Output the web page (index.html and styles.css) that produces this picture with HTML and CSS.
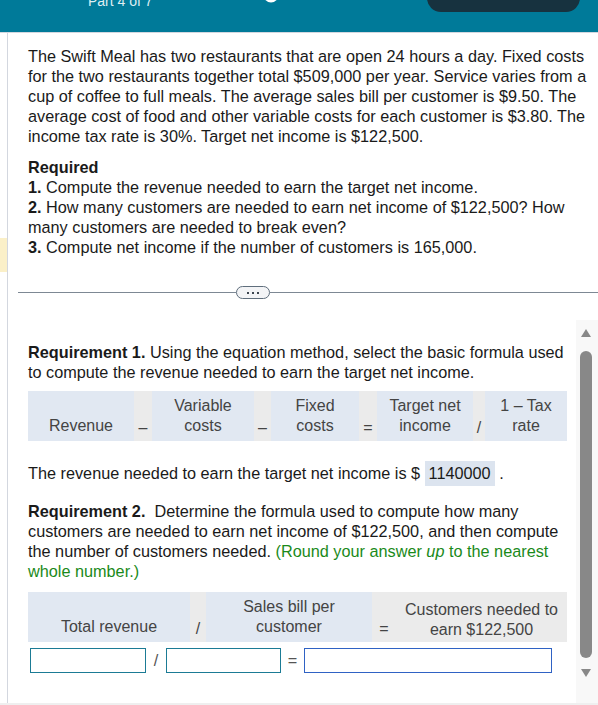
FILE: index.html
```html
<!DOCTYPE html>
<html>
<head>
<meta charset="utf-8">
<link rel="stylesheet" href="styles.css">
</head>
<body>
<header class="topbar">
  <span class="part">Part 4 of 7</span>
  <span class="step"><svg width="16" height="16" viewBox="0 0 16 16"><circle cx="8" cy="8" r="7.5" fill="#fff"/><path d="M5 8.5l2 2 4-4" stroke="#1a9a4a" stroke-width="1.6" fill="none"/></svg></span>
  <span class="darkbtn"></span>
</header>
<div class="page">
  <aside class="gutter"><div class="mark"></div></aside>
  <main class="main">
    <section class="intro">
      <p class="problem">The Swift Meal has two restaurants that are open 24 hours a day. Fixed costs for the two restaurants together total $509,000 per year. Service varies from a cup of coffee to full meals. The average sales bill per customer is $9.50. The average cost of food and other variable costs for each customer is $3.80. The income tax rate is 30%. Target net income is $122,500.</p>
      <p class="req-title">Required</p>
      <ol class="req-list">
        <li><b>1.</b> Compute the revenue needed to earn the target net income.</li>
        <li><b>2.</b> How many customers are needed to earn net income of $122,500? How many customers are needed to break even?</li>
        <li><b>3.</b> Compute net income if the number of customers is 165,000.</li>
      </ol>
    </section>
    <div class="divider"><span class="line"></span><span class="pill"><i></i><i></i><i></i></span><span class="line"></span></div>
    <div class="pane">
      <div class="pane-main">
        <p class="para"><b>Requirement 1.</b> Using the equation method, select the basic formula used to compute the revenue needed to earn the target net income.</p>
        <div class="formula f1">
          <div class="cell">Revenue</div>
          <div class="op">–</div>
          <div class="cell">Variable<br>costs</div>
          <div class="op">–</div>
          <div class="cell">Fixed<br>costs</div>
          <div class="op">=</div>
          <div class="cell">Target net<br>income</div>
          <div class="op">/</div>
          <div class="cell">1 – Tax<br>rate</div>
        </div>
        <p class="answer-line">The revenue needed to earn the target net income is $ <span class="ans">1140000</span> .</p>
        <p class="para req2"><b>Requirement 2.</b>&nbsp; Determine the formula used to compute how many customers are needed to earn net income of $122,500, and then compute the number of customers needed. <span class="green">(Round your answer <i>up</i> to the nearest whole number.)</span></p>
        <div class="formula f2">
          <div class="cell">Total revenue</div>
          <div class="op">/</div>
          <div class="cell">Sales bill per<br>customer</div>
          <div class="op grey">=</div>
          <div class="cell grey low">Customers needed to<br>earn $122,500</div>
        </div>
        <div class="inputs">
          <span class="box b1"></span>
          <span class="sym">/</span>
          <span class="box b2"></span>
          <span class="sym">=</span>
          <span class="box b3"></span>
        </div>
      </div>
      <div class="scroll">
        <span class="arrow up"></span>
        <span class="thumb"></span>
        <span class="arrow down"></span>
      </div>
    </div>
  </main>
</div>
<div class="bottom"></div>
</body>
</html>
```
FILE: styles.css
```css
* { box-sizing: border-box; }
html, body { margin: 0; padding: 0; }
body {
  width: 598px;
  height: 705px;
  overflow: hidden;
  background: #fff;
  font-family: "Liberation Sans", Arial, sans-serif;
  font-size: 16.25px;
  color: #1a1a1a;
}
.topbar {
  height: 33px;
  background: #007a99;
  border-bottom: 1px solid #d3d7df;
  display: flex;
  align-items: flex-start;
  overflow: hidden;
}
.part {
  margin-left: 88px;
  margin-top: -7px;
  color: #dfeef3;
  font-size: 14px;
  line-height: 16px;
  width: 140px;
}
.step {
  margin-top: -13px;
  margin-left: 35px;
  width: 16px;
  height: 16px;
  display: block;
}
.darkbtn {
  margin-left: 148px;
  margin-top: -20px;
  width: 153px;
  height: 32px;
  border-radius: 14px;
  background: #17323f;
}
.page {
  display: flex;
  height: 670px;
}
.gutter {
  width: 8px;
  border-right: 1px solid #d3d7df;
  padding-top: 205px;
}
.mark {
  width: 7px;
  height: 34px;
  background: #fbf0c8;
}
.main {
  flex: 1;
  display: flex;
  flex-direction: column;
  min-width: 0;
}
.intro {
  padding: 13px 6px 0 20px;
}
p { margin: 0; }
.problem { line-height: 20px; }
.req-title {
  font-weight: bold;
  margin-top: 11px;
  line-height: 20px;
}
.req-list {
  list-style: none;
  margin: 0;
  padding: 0;
  line-height: 20px;
}
.divider {
  margin-top: 29px;
  margin-left: 10px;
  display: flex;
  align-items: center;
  height: 13px;
}
.divider .line {
  height: 1px;
  background: #7d8894;
}
.divider .line:first-child { width: 218px; }
.divider .line:last-child { flex: 1; }
.pill {
  width: 34px;
  height: 13px;
  border: 1px solid #5f6e7c;
  border-radius: 7px;
  background: #f3f4f6;
  display: flex;
  justify-content: center;
  align-items: center;
  gap: 3px;
}
.pill i {
  width: 2px;
  height: 2px;
  background: #3c4650;
}
.pane {
  margin-top: 21px;
  flex: 1;
  display: flex;
}
.pane-main {
  flex: 1;
  padding: 22px 0 0 20px;
}
.para { line-height: 20px; width: 548px; }
.para b { font-weight: bold; }
.formula {
  display: grid;
  width: 539px;
  color: #444;
  font-size: 16px;
  line-height: 20px;
  text-align: center;
}
.f1 {
  margin-top: 9px;
  grid-template-columns: 106px 18px 102px 17px 88px 18px 96px 12px 82px;
}
.formula .cell {
  background: #e1e8f2;
  padding: 5px 2px;
  display: flex;
  align-items: flex-end;
  justify-content: center;
}
.formula .op {
  background: #ebebeb;
  padding: 5px 0 3px;
  display: flex;
  align-items: flex-end;
  justify-content: center;
}
.formula .grey { background: #ebebeb; }
.formula .low { padding: 7px 2px 2px; }
.answer-line {
  margin-top: 19px;
  line-height: 26px;
}
.ans {
  display: inline-block;
  background: #dce4ef;
  padding: 0 4px;
  line-height: 25px;
}
.req2 { margin-top: 15px; }
.green { color: #1a8a1a; }
.f2 {
  margin-top: 11px;
  grid-template-columns: 162px 16px 166px 24px 171px;
}
.inputs {
  display: flex;
  align-items: center;
  margin-top: 6px;
  margin-left: 2px;
  height: 25px;
}
.box {
  height: 25px;
  border: 1px solid #1b7b95;
  background: #fff;
}
.b1 { width: 116px; }
.b2 { width: 115px; }
.b3 { width: 248px; border-color: #2f62c4; }
.sym {
  width: 20px;
  text-align: center;
  color: #555;
}
.inputs .sym:nth-of-type(4) { width: 23px; }
.scroll {
  width: 24px;
  background: #f8f8f8;
  display: flex;
  flex-direction: column;
  align-items: center;
  padding-top: 9px;
  padding-right: 2px;
}
.arrow {
  width: 0;
  height: 0;
  border-left: 5px solid transparent;
  border-right: 5px solid transparent;
}
.arrow.up { border-bottom: 8px solid #888; }
.arrow.down { border-top: 8px solid #888; margin-top: 11px; }
.thumb {
  margin-top: 14px;
  width: 12px;
  height: 307px;
  background: #888;
  border-radius: 6px;
}
.bottom {
  height: 2px;
  background: #efefef;
}
```
